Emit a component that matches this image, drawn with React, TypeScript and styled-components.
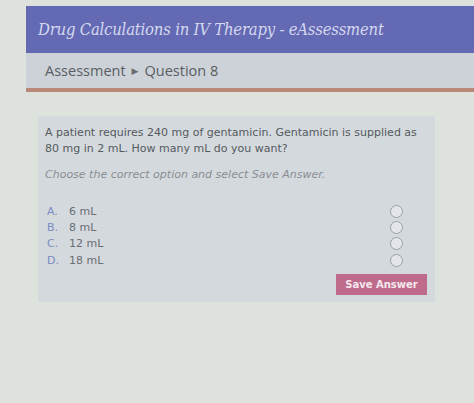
import React from "react";
import styled, { createGlobalStyle } from "styled-components";

const Global = createGlobalStyle`
  html, body { margin: 0; padding: 0; }
  body { background: #dde2dd; width: 474px; height: 403px; overflow: hidden; }
`;

const Page = styled.div`
  padding: 6px 0 0 26px;
  display: flex;
  flex-direction: column;
`;

const Header = styled.div`
  background: #6469b4;
  height: 47px;
  display: flex;
  align-items: center;
  padding-left: 12px;
`;

const Title = styled.h1`
  margin: 0;
  font-family: "DejaVu Serif", "Liberation Serif", serif;
  font-stretch: condensed;
  font-style: italic;
  font-weight: normal;
  font-size: 16.5px;
  letter-spacing: -0.2px;
  color: #d4d8ee;
`;

const Crumbs = styled.div`
  background: #ccd2d8;
  height: 35px;
  display: flex;
  align-items: center;
  gap: 6px;
  padding-left: 19px;
  border-bottom: 4px solid #b98878;
  font-family: "Open Sans", "DejaVu Sans", sans-serif;
  font-size: 14.5px;
  color: #5a5e62;
`;

const Arrow = styled.span`
  font-size: 9px;
  color: #6a6e72;
`;

const Card = styled.div`
  margin: 24px 39px 0 12px;
  background: #d4d9de;
  padding: 9px 8px 7px 7px;
  font-family: "DejaVu Sans", Verdana, sans-serif;
  font-size: 11px;
  color: #55595d;
`;

const Question = styled.p`
  margin: 0;
  line-height: 16px;
`;

const Hint = styled.p`
  margin: 11px 0 0;
  font-style: italic;
  color: #8a8e92;
`;

const Options = styled.div`
  margin-top: 22px;
  display: flex;
  flex-direction: column;
`;

const Option = styled.label`
  display: flex;
  align-items: center;
  height: 16.3px;
  padding-left: 2px;
`;

const Letter = styled.span`
  width: 22px;
  color: #7b8cbf;
`;

const Value = styled.span`
  flex: 1;
  color: #6a6e72;
`;

const Radio = styled.span`
  width: 11px;
  height: 11px;
  border-radius: 50%;
  border: 1px solid #9aa0a6;
  background: #e2e6ea;
  margin-right: 24px;
`;

const Footer = styled.div`
  display: flex;
  justify-content: flex-end;
  margin-top: 6px;
`;

const SaveButton = styled.button`
  background: #bf6b8b;
  border: none;
  color: #f4e8ee;
  font-family: "DejaVu Sans", Verdana, sans-serif;
  font-weight: bold;
  font-size: 10px;
  width: 91px;
  height: 21px;
  padding: 0;
`;

const options = [
  ["A.", "6 mL"],
  ["B.", "8 mL"],
  ["C.", "12 mL"],
  ["D.", "18 mL"],
];

export default function App() {
  return (
    <>
      <Global />
      <Page>
        <Header>
          <Title>Drug Calculations in IV Therapy - eAssessment</Title>
        </Header>
        <Crumbs>
          <span>Assessment</span>
          <Arrow>▶</Arrow>
          <span>Question 8</span>
        </Crumbs>
        <Card>
          <Question>
            A patient requires 240 mg of gentamicin. Gentamicin is supplied as
            80 mg in 2 mL. How many mL do you want?
          </Question>
          <Hint>Choose the correct option and select Save Answer.</Hint>
          <Options>
            {options.map(([l, v]) => (
              <Option key={l}>
                <Letter>{l}</Letter>
                <Value>{v}</Value>
                <Radio />
              </Option>
            ))}
          </Options>
          <Footer>
            <SaveButton>Save Answer</SaveButton>
          </Footer>
        </Card>
      </Page>
    </>
  );
}
